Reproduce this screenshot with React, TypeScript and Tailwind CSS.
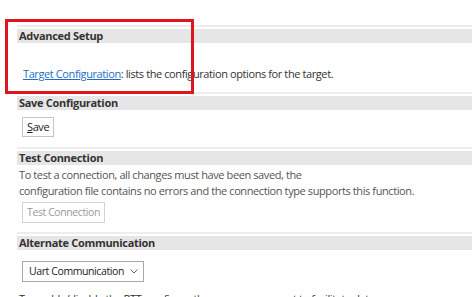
import React from "react";

const font = { fontFamily: '"Open Sans", "Noto Sans", sans-serif' };

function Section({ title, children }: { title: string; children?: React.ReactNode }) {
  return (
    <div>
      <div className="h-[2px] bg-[#ededed]" />
      <div className="mt-[2px] h-[14px] bg-[#e6e6e6] pl-[2px] text-[11px] tracking-[-0.3px] leading-[14px] font-bold text-[#333333]">
        {title}
      </div>
      {children}
    </div>
  );
}

export default function App() {
  return (
    <div
      className="relative w-[474px] h-[297px] overflow-hidden bg-white pl-[17px] pr-[2px] pt-[25px] text-[11px] tracking-[-0.4px] text-[#333333]"
      style={font}
    >
      <Section title="Advanced Setup">
        <div className="mt-[23px] pl-[6px] leading-[16px] whitespace-nowrap">
          <span className="text-[#1a6fc4] underline">Target Configuration</span>
          : lists the configuration options for the target.
        </div>
      </Section>
      <div className="mt-[10px]">
        <Section title="Save Configuration">
          <div className="mt-[7px] pl-[5px]">
            <div className="inline-flex h-[20px] items-center border border-[#c4c4c4] bg-white px-[4px] leading-[16px] text-[#222]">
              <span className="underline">S</span>ave
            </div>
          </div>
        </Section>
      </div>
      <div className="mt-[10px]">
        <Section title="Test Connection">
          <div className="mt-[2px] pl-[2px] leading-[16px] text-[#555] whitespace-nowrap">
            To test a connection, all changes must have been saved, the
            <br />
            configuration file contains no errors and the connection type supports this function.
          </div>
          <div className="mt-[3px] pl-[5px]">
            <div className="inline-flex h-[21px] items-center border border-[#d4d4d4] px-[4px] text-[10.5px] text-[#9a9a9a] whitespace-nowrap">
              Test Connection
            </div>
          </div>
        </Section>
      </div>
      <div className="mt-[9px]">
        <Section title="Alternate Communication">
          <div className="mt-[11px] pl-[5px]">
            <div className="inline-flex h-[21px] w-[122px] items-center justify-between border border-[#a8a8a8] bg-white pl-[6px] pr-[5px] text-[10.5px] text-[#222] whitespace-nowrap">
              <span>Uart Communication</span>
              <svg width="8" height="5" viewBox="0 0 8 5" fill="none">
                <path d="M0.5 0.5 L4 4 L7.5 0.5" stroke="#666" strokeWidth="1" />
              </svg>
            </div>
          </div>
          <div className="mt-[9px] pl-[2px] leading-[16px] text-[#333] whitespace-nowrap">
            To enable/disable the RTT, configure the memory segment to facilitate data
          </div>
        </Section>
      </div>
      <div className="absolute left-[5px] top-[19px] h-[75px] w-[189px] border-[3px] border-[#e0141e]" />
    </div>
  );
}
